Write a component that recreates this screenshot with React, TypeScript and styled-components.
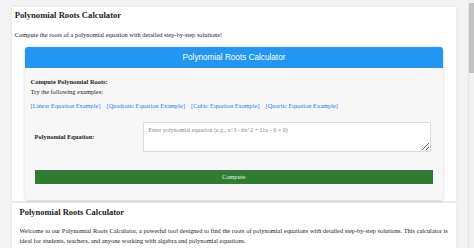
import styled, { createGlobalStyle } from 'styled-components';

const GlobalStyle = createGlobalStyle`
  html, body {
    margin: 0;
    padding: 0;
    background: #f3f3f3;
  }
  body {
    font-family: "Liberation Serif", "Times New Roman", serif;
    color: #222;
  }
`;

/* the page is laid out at its natural size and shrunk as a whole */
const Page = styled.div`
  zoom: 0.4;
  padding: 18px 15px 30px 0;
  font-size: 16px;
`;

/* window scrollbar, drawn since the headless browser hides its own */
const ScrollRail = styled.div`
  position: fixed;
  top: 0;
  right: 0;
  width: 6px;
  height: 100vh;
  background: #f1f1f1;
  border-left: 1px solid #e6e6e6;
  box-sizing: border-box;
`;

const ScrollThumb = styled.div`
  position: absolute;
  top: 3px;
  left: 0;
  right: 0;
  height: 70px;
  background: #c2c2c2;
`;

const Container = styled.div`
  box-sizing: border-box;
  max-width: 1112px;
  margin: 0 auto 5px;
  background: #fff;
  box-shadow: 0 0 8px rgba(0, 0, 0, 0.08);
  padding: 6px 8px 3px;
`;

const Title = styled.h1`
  font-size: 21.6px;
  font-weight: bold;
  margin: 1px 0 27px;
`;

const Intro = styled.p`
  margin: 0 0 23px;
  line-height: 18px;
`;

const Card = styled.div`
  width: 1047px;
  margin: 0 auto;
  border-radius: 8px;
  background: #f7f7f7;
  box-shadow: 0 2px 8px rgba(0, 0, 0, 0.18);
`;

const CardHeader = styled.div`
  background: #2196f3;
  color: #fff;
  font-family: "Liberation Sans", Arial, sans-serif;
  font-size: 20.5px;
  text-align: center;
  padding: 15px 0;
  line-height: 23px;
  border-radius: 8px 8px 0 0;
`;

const CardBody = styled.div`
  padding: 21px 15px 39px;
`;

const Lead = styled.p`
  margin: 0;
  line-height: 25px;
`;

const Links = styled.div`
  display: flex;
  gap: 15px;
  margin-top: 10px;
  line-height: 25px;
`;

const ExampleLink = styled.a`
  color: #2f80e4;
  text-decoration: none;
  cursor: pointer;
`;

const Form = styled.div`
  padding: 0 12px 0 10px;
  margin-top: 28px;
`;

const FieldRow = styled.div`
  display: grid;
  grid-template-columns: 272px 1fr;
  align-items: center;
  padding-right: 5px;
`;

const Label = styled.label`
  font-weight: bold;
`;

const Equation = styled.textarea`
  height: 75px;
  box-sizing: border-box;
  border: 1px solid #dcdcdc;
  border-radius: 3px;
  background: #fff;
  padding: 9px 10px;
  font-family: "Liberation Serif", "Times New Roman", serif;
  font-size: 15px;
  resize: vertical;
  &::placeholder {
    color: #8a8a8a;
  }
`;

const ComputeButton = styled.button`
  display: block;
  width: 100%;
  height: 35px;
  margin-top: 45px;
  border: none;
  background: #2e7d32;
  color: #e8f2e8;
  font-family: "Liberation Serif", "Times New Roman", serif;
  font-size: 16px;
  cursor: pointer;
`;

const Section = styled.div`
  box-sizing: border-box;
  max-width: 1112px;
  margin: 0 auto 5px;
  background: #fff;
  box-shadow: 0 0 8px rgba(0, 0, 0, 0.08);
  padding: 10px 20px 20px;
`;

const SectionTitle = styled.h2`
  font-size: 21.2px;
  font-weight: bold;
  margin: 0 0 24px;
`;

const Text = styled.p`
  margin: 0 0 16px;
  line-height: 25px;
`;

const examples = [
  'Linear Equation Example',
  'Quadratic Equation Example',
  'Cubic Equation Example',
  'Quartic Equation Example',
];

export default function App() {
  return (
    <>
      <GlobalStyle />
      <Page>
        <Container>
          <Title>Polynomial Roots Calculator</Title>
          <Intro>Compute the roots of a polynomial equation with detailed step-by-step solutions!</Intro>
          <Card>
            <CardHeader>Polynomial Roots Calculator</CardHeader>
            <CardBody>
              <Lead>
                <b>Compute Polynomial Roots:</b>
                <br />
                Try the following examples:
              </Lead>
              <Links>
                {examples.map((e) => (
                  <ExampleLink key={e}>[{e}]</ExampleLink>
                ))}
              </Links>
              <Form>
                <FieldRow>
                  <Label>Polynomial Equation:</Label>
                  <Equation placeholder="Enter polynomial equation (e.g., x^3 - 6x^2 + 11x - 6 = 0)" />
                </FieldRow>
                <ComputeButton>Compute</ComputeButton>
              </Form>
            </CardBody>
          </Card>
        </Container>
        <Section>
          <SectionTitle>Polynomial Roots Calculator</SectionTitle>
          <Text>
            Welcome to our Polynomial Roots Calculator, a powerful tool designed to find the roots of polynomial
            equations with detailed step-by-step solutions. This calculator is ideal for students, teachers, and
            anyone working with algebra and polynomial equations.
          </Text>
          <SectionTitle>How to Use the Calculator</SectionTitle>
          <Text>
            Enter your polynomial equation in the input field, using ^ for powers. Click Compute and the calculator
            will factor the polynomial, find its real and complex roots and show every step of the work.
          </Text>
          <Text>
            You can also pick one of the examples above to see how linear, quadratic, cubic and quartic equations
            are solved.
          </Text>
          <SectionTitle>Methods Used</SectionTitle>
          <Text>
            Linear equations are solved directly. Quadratic equations use the quadratic formula. Cubic and quartic
            equations are solved with the rational root theorem, synthetic division and the general formulas where
            needed.
          </Text>
          <Text>
            Higher degree polynomials are reduced step by step until the remaining factors can be solved, and
            numerical methods are used to approximate roots that cannot be written exactly.
          </Text>
        </Section>
        <Section>
          <SectionTitle>Frequently Asked Questions</SectionTitle>
          <Text>
            What is a root of a polynomial? A root is a value of the variable for which the polynomial equals zero.
          </Text>
          <Text>
            How many roots can a polynomial have? A polynomial of degree n has exactly n roots, counted with
            multiplicity, some of which may be complex numbers.
          </Text>
          <Text>
            Can the calculator handle complex roots? Yes, complex roots are shown in the form a + bi together with
            the steps used to find them.
          </Text>
        </Section>
      </Page>
      <ScrollRail>
        <ScrollThumb />
      </ScrollRail>
    </>
  );
}
